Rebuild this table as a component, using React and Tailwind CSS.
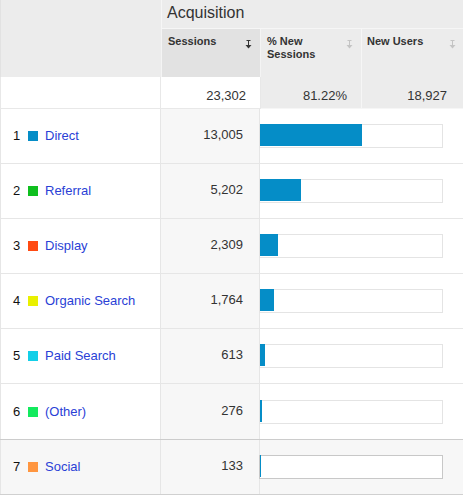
import React from 'react';

const rows = [
  { n: 1, label: 'Direct', color: '#058dc7', value: 13005 },
  { n: 2, label: 'Referral', color: '#0fbf1f', value: 5202 },
  { n: 3, label: 'Display', color: '#ff4a12', value: 2309 },
  { n: 4, label: 'Organic Search', color: '#e9f000', value: 1764 },
  { n: 5, label: 'Paid Search', color: '#13cfe8', value: 613 },
  { n: 6, label: '(Other)', color: '#13ea5e', value: 276 },
  { n: 7, label: 'Social', color: '#ff9640', value: 133 },
];

const TOTAL = 23302;
const fmt = (v) => v.toLocaleString('en-US');

// small sort arrow used in the column headers
const SortArrow = ({ active }) => (
  <svg width="7" height="9" viewBox="0 0 7 9" className="shrink-0 mt-[5px]">
    <g fill={active ? '#333' : '#c4c4c4'}>
      <rect x="1.5" y="0" width="4" height="1" />
      <rect x="3" y="0" width="1" height="6" />
      <polygon points="0.5,5 6.5,5 3.5,8.5" />
    </g>
  </svg>
);

const App = () => {
  return (
    <div className="w-[463px] h-[495px] bg-white font-['Liberation_Sans',Arial,sans-serif] text-[#333] overflow-hidden">
      {/* Header */}
      <div className="grid grid-cols-[161px_100px_101px_101px] grid-rows-[29px_48px_32px]">
        <div className="row-span-2 bg-[#ececec] border-l border-[#e2e2e2]" />
        <div className="col-span-3 bg-[#ececec] border-l border-b border-[#f6f6f6] pl-[5px] pt-[3px] text-[16px] leading-[20px]">
          Acquisition
        </div>

        <div className="bg-[#e2e2e2] border-l border-r border-[#f4f4f4] flex justify-between pl-[6px] pr-[8px] pt-[6px]">
          <span className="font-bold text-[11px] leading-[13px]">Sessions</span>
          <SortArrow active />
        </div>
        <div className="bg-[#ececec] border-r border-[#f6f6f6] flex justify-between pl-[6px] pr-[8px] pt-[6px]">
          <span className="font-bold text-[11px] leading-[13px]">% New<br />Sessions</span>
          <SortArrow />
        </div>
        <div className="bg-[#ececec] flex justify-between pl-[5px] pr-[7px] pt-[6px]">
          <span className="font-bold text-[11px] leading-[13px]">New Users</span>
          <SortArrow />
        </div>

        {/* Totals */}
        <div className="bg-white border-l border-r border-b border-[#e8e8e8]" />
        <div className="bg-white border-r border-b border-[#e8e8e8] flex items-center justify-end pr-[14px] pt-[7px] text-[13px]">
          {fmt(TOTAL)}
        </div>
        <div className="bg-[#ececec] border-r border-b border-[#f6f6f6] flex items-center justify-end pr-[14px] pt-[7px] text-[13px]">
          81.22%
        </div>
        <div className="bg-[#ececec] border-b border-[#f6f6f6] flex items-center justify-end pr-[16px] pt-[7px] text-[13px]">
          18,927
        </div>
      </div>

      {/* Rows */}
      {rows.map((r) => {
        const last = r.n === 7;
        const pct = Math.max((r.value / TOTAL) * 100, 0.6);
        return (
          <div
            key={r.n}
            className={`flex h-[55px] border-b ${
              last ? 'bg-[#f7f7f7] border-[#d0d0d0] border-t border-t-[#cccccc] h-[56px]' : 'border-[#e6e6e6]'
            } ${r.n === 6 ? 'border-b-0' : ''}`}
          >
            <div className="w-[161px] border-l border-r border-[#e6e6e6] flex items-center pl-[12px] text-[13px]">
              <span className="text-[#111] w-[15px]">{r.n}</span>
              <span className="w-[10px] h-[10px]" style={{ backgroundColor: r.color }} />
              <span className="ml-[7px] text-[#2a3fd6]">{r.label}</span>
            </div>
            <div className="w-[99px] bg-[#f7f7f7] border-r border-[#e6e6e6] flex items-center justify-end pr-[16px] pb-[2px] text-[13px]">
              {fmt(r.value)}
            </div>
            <div className="flex-1 flex items-center">
              <div
                className={`w-[184px] h-[24px] border bg-white flex ${
                  last ? 'border-[#c8c8c8]' : 'border-[#e4e4e4]'
                } -ml-px`}
              >
                <div className="h-full bg-[#058dc7] -my-px h-[24px]" style={{ width: `${pct}%` }} />
              </div>
            </div>
          </div>
        );
      })}
    </div>
  );
};

export default App;
